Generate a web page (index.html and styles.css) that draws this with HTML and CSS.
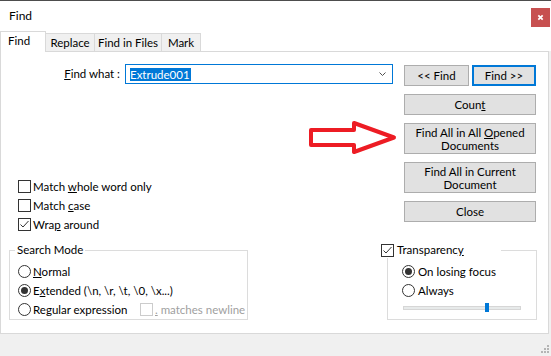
FILE: index.html
```html
<!DOCTYPE html>
<html>
<head>
<meta charset="utf-8">
<title>Find</title>
<link rel="stylesheet" href="styles.css">
</head>
<body>
<div class="window">
  <div class="titlebar">
    <span class="title">Find</span>
    <span class="close"><svg width="19" height="19" viewBox="0 0 19 19"><path d="M7.3 7.3 L11.7 11.7 M11.7 7.3 L7.3 11.7" stroke="#fff" stroke-width="1.7"/></svg></span>
  </div>
  <div class="tabs">
    <div class="tab active">Find</div>
    <div class="tab t-replace">Replace</div>
    <div class="tab t-files">Find in Files</div>
    <div class="tab t-mark">Mark</div>
  </div>
  <div class="panel-row">
    <div class="panel">
      <div class="upper">
        <div class="left">
          <div class="find-row">
            <span class="label"><u>F</u>ind what :</span>
            <div class="combo">
              <span class="sel">Extrude001</span>
              <svg class="chev" width="7" height="4" viewBox="0 0 7 4"><polyline points="0.5,0.5 3.5,3.5 6.5,0.5" fill="none" stroke="#505050" stroke-width="1"/></svg>
            </div>
          </div>
          <div class="checks">
            <label class="opt"><span class="cb"></span><span class="txt">Match <u>w</u>hole word only</span></label>
            <label class="opt"><span class="cb"></span><span class="txt">Match <u>c</u>ase</span></label>
            <label class="opt"><span class="cb"><svg width="11" height="11" viewBox="0 0 11 11"><polyline points="1.5,5.5 4,8 9.5,2" fill="none" stroke="#333" stroke-width="1"/></svg></span><span class="txt">Wra<u>p</u> around</span></label>
          </div>
        </div>
        <div class="buttons">
          <div class="pair">
            <button class="btn prev">&lt;&lt; Find</button>
            <button class="btn default">Find &gt;&gt;</button>
          </div>
          <button class="btn">Coun<u>t</u></button>
          <button class="btn tall">Find All in All <u>O</u>pened<br>Documents</button>
          <button class="btn tall">Find All in Current<br>Document</button>
          <button class="btn">Close</button>
        </div>
      </div>
      <div class="lower">
        <fieldset class="group mode">
          <legend class="mode-legend">Search Mode</legend>
          <div class="rows mode-rows">
            <label class="opt"><span class="rb"></span><span class="txt"><u>N</u>ormal</span></label>
            <label class="opt"><span class="rb on"></span><span class="txt">E<u>x</u>tended (\n, \r, \t, \0, \x...)</span></label>
            <div class="opt-row">
              <label class="opt regex"><span class="rb"></span><span class="txt">Re<u>g</u>ular expression</span></label>
              <label class="opt disabled"><span class="cb"></span><span class="txt"><u>.</u> matches newline</span></label>
            </div>
          </div>
        </fieldset>
        <fieldset class="group transp">
          <legend class="transp-legend"><span class="cb"><svg width="11" height="11" viewBox="0 0 11 11"><polyline points="1.5,5.5 4,8 9.5,2" fill="none" stroke="#333" stroke-width="1"/></svg></span><span class="txt">Transparenc<u>y</u></span></legend>
          <div class="rows transp-rows">
            <label class="opt"><span class="rb on"></span><span class="txt">On losing focus</span></label>
            <label class="opt"><span class="rb"></span><span class="txt">Always</span></label>
            <div class="slider"><div class="track"><span class="thumb"></span></div></div>
          </div>
        </fieldset>
      </div>
    </div>
  </div>
  <div class="statusbar">
    <svg class="grip" width="9" height="9" viewBox="0 0 9 9"><g fill="#b4b4b4"><rect x="6" y="0" width="2" height="2"/><rect x="3" y="3" width="2" height="2"/><rect x="6" y="3" width="2" height="2"/><rect x="0" y="6" width="2" height="2"/><rect x="3" y="6" width="2" height="2"/><rect x="6" y="6" width="2" height="2"/></g></svg>
  </div>
  <svg class="arrow" width="96" height="44" viewBox="0 0 96 44"><polygon points="6,14 49,14 49,7 89,21.5 49,36 49,29 6,29" fill="none" stroke="#ed1c24" stroke-width="4" stroke-linejoin="round"/></svg>
</div>
</body>
</html>
```

FILE: styles.css
```css
body {
  margin: 0;
  font-family: Lato, "Liberation Sans", sans-serif;
  font-size: 11.5px;
  color: #000;
}

.window {
  position: relative;
  width: 551px;
  height: 356px;
  background: #fff;
  overflow: hidden;
}

u {
  text-underline-offset: 1px;
}

/* title bar */
.titlebar {
  height: 31px;
  box-sizing: border-box;
  border-top: 1px solid #4d4d4d;
  display: flex;
  justify-content: space-between;
  align-items: flex-start;
}

.title {
  margin: 7px 0 0 9px;
  line-height: 16px;
  font-size: 12px;
}

.close {
  width: 19px;
  height: 19px;
  margin: 7px 1px 0 0;
  background: #c75050;
  display: flex;
}

/* tabs */
.tabs {
  height: 20px;
  display: flex;
  align-items: flex-end;
}

.tab {
  box-sizing: border-box;
  height: 18px;
  border: 1px solid #d9d9d9;
  border-bottom: none;
  background: #f0f0f0;
  display: flex;
  align-items: center;
  justify-content: center;
  margin-left: -1px;
  line-height: 16px;
}

.tab.active {
  width: 46px;
  height: 21px;
  margin-left: 0;
  margin-bottom: -1px;
  padding: 0 0 2px 7px;
  justify-content: flex-start;
  background: #fff;
  position: relative;
  z-index: 1;
}

.t-replace { width: 50px; }
.t-files { width: 68px; }
.t-mark { width: 40px; }

/* panel */
.panel-row {
  display: flex;
  background: #f0f0f0;
}

.panel {
  width: 549px;
  height: 283px;
  box-sizing: border-box;
  border: 1px solid #d9d9d9;
  background: #fff;
}

.upper {
  display: flex;
  padding: 12px 12px 0 17px;
}

.left {
  flex: 1;
}

.find-row {
  display: flex;
  justify-content: flex-end;
  align-items: center;
  height: 20px;
  gap: 5px;
}

.label {
  line-height: 16px;
}

.combo {
  width: 268px;
  height: 20px;
  box-sizing: border-box;
  border: 1px solid #0078d7;
  display: flex;
  align-items: center;
  justify-content: space-between;
  padding: 0 6px 0 4px;
}

.sel {
  background: #0078d7;
  color: #fff;
  height: 13px;
  line-height: 13px;
  padding-right: 1px;
}

.checks {
  margin-top: 93px;
  display: flex;
  flex-direction: column;
}

.opt {
  display: flex;
  align-items: center;
  height: 19px;
  gap: 2px;
  line-height: 16px;
  white-space: nowrap;
}

.cb {
  width: 13px;
  height: 13px;
  box-sizing: border-box;
  border: 1px solid #333;
  background: #fff;
  flex: none;
  display: flex;
}

.rb {
  width: 13px;
  height: 13px;
  box-sizing: border-box;
  border: 1px solid #333;
  border-radius: 50%;
  background: #fff;
  flex: none;
  display: flex;
  align-items: center;
  justify-content: center;
}

.rb.on::after {
  content: "";
  width: 7px;
  height: 7px;
  border-radius: 50%;
  background: #333;
}

/* buttons */
.buttons {
  width: 132px;
  margin: 1px 0 0 11px;
  display: flex;
  flex-direction: column;
  gap: 8px;
}

.pair {
  display: flex;
  gap: 3px;
}

.btn {
  font: inherit;
  color: #000;
  height: 21px;
  box-sizing: border-box;
  border: 1px solid #adadad;
  background: #e1e1e1;
  padding: 0;
  margin: 0;
  line-height: 13px;
}

.btn.prev { width: 65px; }

.btn.default {
  width: 64px;
  border: 2px solid #0078d7;
}

.btn.tall { height: 31px; }

/* group boxes */
.lower {
  display: flex;
  align-items: flex-start;
  padding-left: 8px;
  margin-top: 8px;
}

.group {
  margin: 0;
  padding: 0;
  border: 1px solid #dcdcdc;
  box-sizing: border-box;
  min-width: 0;
}

.mode { width: 239px; }

.mode-legend {
  padding: 0 2px;
  margin-left: 5px;
  line-height: 16px;
}

.rows {
  padding-top: 4px;
  display: flex;
  flex-direction: column;
}

.mode-rows { padding-left: 8px; }

.opt-row {
  display: flex;
  align-items: center;
  height: 19px;
}

.regex { width: 122px; }

.disabled { color: #a0a0a0; }
.disabled .cb { border-color: #cccccc; }

.transp {
  width: 150px;
  margin-left: 139px;
}

.transp-legend {
  width: 120px;
  padding: 0;
  margin-left: -7px;
  display: flex;
  align-items: center;
  gap: 3px;
  height: 16px;
  line-height: 16px;
}

.transp-rows {
  padding-left: 14px;
}

.transp-rows .opt { gap: 3px; }

.slider {
  height: 19px;
  box-sizing: border-box;
  padding: 6px 0 0 1px;
}

.track {
  position: relative;
  width: 118px;
  height: 4px;
  box-sizing: border-box;
  border: 1px solid #d6d6d6;
  background: #e7eaea;
}

.thumb {
  position: absolute;
  left: 81px;
  top: -4px;
  width: 4px;
  height: 9px;
  background: #0078d7;
}

/* bottom strip */
.statusbar {
  height: 22px;
  box-sizing: border-box;
  background: #f0f0f0;
  display: flex;
  justify-content: flex-end;
  align-items: flex-end;
  padding: 0 1px 2px 0;
}

/* annotation arrow drawn over the dialog */
.arrow {
  position: absolute;
  left: 305px;
  top: 116px;
}
```
